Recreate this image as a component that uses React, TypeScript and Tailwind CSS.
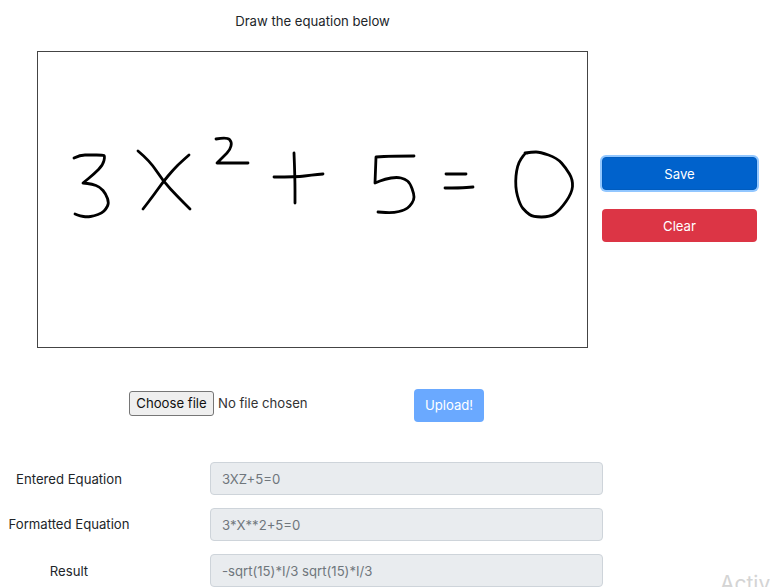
const font = { fontFamily: '"Inter", "Liberation Sans", sans-serif' };

type P = [number, number];

const smooth = (pts: P[]) => {
  let d = `M${pts[0][0]} ${pts[0][1]}`;
  for (let i = 1; i < pts.length - 1; i++) {
    const mx = (pts[i][0] + pts[i + 1][0]) / 2;
    const my = (pts[i][1] + pts[i + 1][1]) / 2;
    d += ` Q${pts[i][0]} ${pts[i][1]} ${mx} ${my}`;
  }
  const last = pts[pts.length - 1];
  return d + ` L${last[0]} ${last[1]}`;
};

const strokes: P[][] = [
  [[74, 158], [80, 155], [90, 155], [103, 155], [105, 156], [103, 165], [94, 174], [83, 183], [83, 183], [92, 184], [100, 187], [106, 194], [109, 203], [106, 209], [102, 213], [94, 216], [87, 217], [80, 216], [75, 214]],
  [[138, 151], [150, 161], [163, 181], [178, 197], [190, 209]],
  [[189, 155], [181, 162], [173, 170], [163, 182], [153, 196], [143, 209]],
  [[216, 139], [227, 137], [232, 142], [230, 150], [224, 156], [217, 163], [217, 163], [232, 163], [248, 163]],
  [[274, 177], [297, 177], [312, 175], [323, 174]],
  [[294, 153], [295, 178], [295, 203]],
  [[414, 156], [392, 156], [376, 157], [376, 157], [375, 183], [375, 183], [385, 179], [397, 177], [405, 179], [410, 183], [414, 194], [414, 200], [410, 206], [405, 210], [393, 213], [378, 212]],
  [[446, 174], [466, 174]],
  [[445, 188], [460, 188], [473, 187]],
  [[525, 153], [532, 152], [540, 152], [557, 158], [566, 168], [573, 180], [572, 193], [560, 210], [550, 217], [533, 217], [526, 212], [520, 205], [515, 187], [517, 165], [525, 153], [528, 153]],
];

const rows = [
  ["Entered Equation", "3XZ+5=0"],
  ["Formatted Equation", "3*X**2+5=0"],
  ["Result", "-sqrt(15)*I/3 sqrt(15)*I/3"],
];

export default function App() {
  return (
    <div style={font} className="relative h-[587px] w-[770px] overflow-hidden bg-white text-[13.15px] text-[#212529]">
      <div className="flex h-[51px] w-[625px] justify-center pt-[13px] leading-[16px]">Draw the equation below</div>

      <div className="flex items-start pl-[37px]">
        <div className="h-[297px] w-[551px] border border-[#444444]">
          <svg viewBox="38 52 549 295" className="block h-full w-full" fill="none" stroke="#000000" strokeWidth="2.8" strokeLinecap="round" strokeLinejoin="round">
            {strokes.map((pts, i) => (
              <path key={i} d={smooth(pts)} />
            ))}
          </svg>
        </div>
        <div className="ml-[14px] flex w-[155px] flex-col gap-[19px] pt-[106px]">
          <button className="h-[33px] rounded-[4px] border border-[#005cbf] bg-[#0062cc] pt-[2px] text-center text-white shadow-[0_0_0_2px_rgba(38,143,255,0.5)]">Save</button>
          <button className="h-[33px] rounded-[4px] bg-[#dc3545] pt-[2px] text-center text-white">Clear</button>
        </div>
      </div>

      <div className="flex items-start pl-[129px] pt-[41px]">
        <div className="mt-[2px] flex w-[285px] items-center">
          <button className="h-[25px] w-[85px] rounded-[3px] border border-[#767676] bg-[#efefef] pt-[1px] text-center text-[#111111]">Choose file</button>
          <span className="ml-[4px] pt-[1px] text-[#333333]">No file chosen</span>
        </div>
        <button className="h-[33px] w-[70px] rounded-[4px] bg-[#6aa9ff] pt-[1px] text-center text-white">Upload!</button>
      </div>

      <div className="flex flex-col gap-[13px] pt-[40px]">
        {rows.map(([label, value], i) => (
          <div key={label} className="flex items-center">
            <div className={i === 1 ? "w-[138px] pt-[1px] text-center" : "w-[138px] pt-[3px] text-center"}>{label}</div>
            <input
              readOnly
              value={value}
              className="ml-[72px] h-[33px] w-[393px] rounded-[4px] border border-[#ced4da] bg-[#e9ecef] px-[11px] text-[13.15px] text-[#6f767c]"
            />
          </div>
        ))}
      </div>

      <div className="absolute left-[720px] top-[572px] text-[21px] leading-[24px] text-[#d4d4d4]">Active</div>
    </div>
  );
}
